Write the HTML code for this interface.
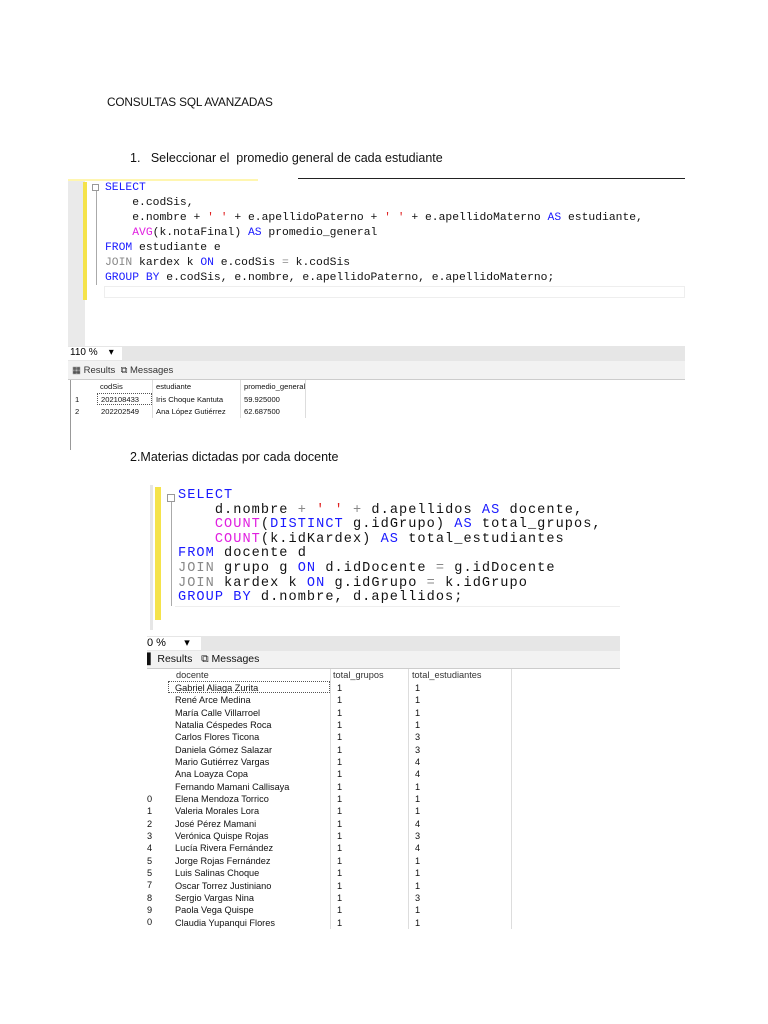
<!DOCTYPE html>
<html><head><meta charset="utf-8"><style>
*{margin:0;padding:0;box-sizing:border-box}
body{width:768px;height:1024px;background:#fff;position:relative;overflow:hidden;font-family:"Liberation Sans",sans-serif}
.a{position:absolute;white-space:pre}
.t{font-family:"Liberation Sans",sans-serif;font-size:12.5px;color:#111}
.c1{font-family:"Liberation Mono",monospace;font-size:11.35px;color:#111;line-height:15px}
.c2{font-family:"Liberation Mono",monospace;font-size:13.6px;letter-spacing:1.05px;color:#111;line-height:14.6px}
.k{color:#1a1aff}.f{color:#e020e0}.g{color:#888}.s{color:#e02020}
.sm{font-size:7.6px;color:#111}
.r2{font-size:9.2px;color:#111}
</style></head><body>
<div class="a t" style="left:107px;top:95px;font-size:11.8px;letter-spacing:-0.15px">CONSULTAS SQL AVANZADAS</div>
<div class="a t" style="left:130px;top:151px">1.   Seleccionar el  promedio general de cada estudiante</div>

<!-- block 1 -->
<div class="a" style="left:68px;top:179px;width:190px;height:2px;background:#fff6b0"></div>
<div class="a" style="left:298px;top:178px;width:387px;height:1px;background:#222"></div>
<div class="a" style="left:68px;top:181px;width:17px;height:166px;background:#eaeaea"></div>
<div class="a" style="left:83px;top:182px;width:4px;height:118px;background:#f5e34a"></div>
<div class="a" style="left:96px;top:189px;width:1px;height:96px;background:#aaa"></div>
<div class="a" style="left:92px;top:184px;width:7px;height:7px;border:1px solid #999;background:#fff"></div>
<div class="a" style="left:104px;top:286px;width:581px;height:12px;border:1px solid #eee"></div>
<div class="a c1" style="left:105px;top:181px"><span class="k">SELECT</span>
    e.codSis,
    e.nombre + <span class="s">' '</span> + e.apellidoPaterno + <span class="s">' '</span> + e.apellidoMaterno <span class="k">AS</span> estudiante,
    <span class="f">AVG</span>(k.notaFinal) <span class="k">AS</span> promedio_general
<span class="k">FROM</span> estudiante e
<span class="g">JOIN</span> kardex k <span class="k">ON</span> e.codSis <span class="g">=</span> k.codSis
<span class="k">GROUP BY</span> e.codSis, e.nombre, e.apellidoPaterno, e.apellidoMaterno;</div>
<div class="a" style="left:68px;top:346px;width:617px;height:15px;background:#e6e6e6"></div>
<div class="a" style="left:68px;top:347px;width:54px;height:13px;background:#fff"></div>
<div class="a" style="left:70px;top:347px;font-size:10px">110 %    ▾</div>
<div class="a" style="left:68px;top:361px;width:617px;height:18px;background:#f2f2f2"></div>
<div class="a" style="left:72px;top:365px;font-size:9.5px;color:#333">▦ Results  ⧉ Messages</div>
<div class="a" style="left:70px;top:379px;width:1px;height:71px;background:#999"></div>
<div class="a" style="left:68px;top:379px;width:617px;height:1px;background:#ccc"></div>
<div class="a sm" style="left:100px;top:382px">codSis</div>
<div class="a sm" style="left:156px;top:382px">estudiante</div>
<div class="a sm" style="left:244px;top:382px">promedio_general</div>
<div class="a" style="left:152px;top:380px;width:1px;height:38px;background:#ddd"></div>
<div class="a" style="left:240px;top:380px;width:1px;height:38px;background:#ddd"></div>
<div class="a" style="left:305px;top:380px;width:1px;height:38px;background:#ddd"></div>
<div class="a" style="left:97px;top:393px;width:55px;height:12px;border:1px dotted #555"></div>
<div class="a sm" style="left:75px;top:395px">1</div>
<div class="a sm" style="left:101px;top:395px">202108433</div>
<div class="a sm" style="left:156px;top:395px">Iris Choque Kantuta</div>
<div class="a sm" style="left:244px;top:395px">59.925000</div>
<div class="a sm" style="left:75px;top:407px">2</div>
<div class="a sm" style="left:101px;top:407px">202202549</div>
<div class="a sm" style="left:156px;top:407px">Ana López Gutiérrez</div>
<div class="a sm" style="left:244px;top:407px">62.687500</div>

<div class="a t" style="left:130px;top:450px">2.Materias dictadas por cada docente</div>

<!-- block 2 -->
<div class="a" style="left:150px;top:485px;width:3px;height:145px;background:#e6e6e6"></div>
<div class="a" style="left:155px;top:487px;width:6px;height:133px;background:#f5e34a"></div>
<div class="a" style="left:171px;top:499px;width:1px;height:107px;background:#aaa"></div>
<div class="a" style="left:167px;top:494px;width:8px;height:8px;border:1px solid #999;background:#fff"></div>
<div class="a c2" style="left:178px;top:489px"><span class="k">SELECT</span>
    d.nombre <span class="g">+</span> <span class="s">' '</span> <span class="g">+</span> d.apellidos <span class="k">AS</span> docente,
    <span class="f">COUNT</span>(<span class="k">DISTINCT</span> g.idGrupo) <span class="k">AS</span> total_grupos,
    <span class="f">COUNT</span>(k.idKardex) <span class="k">AS</span> total_estudiantes
<span class="k">FROM</span> docente d
<span class="g">JOIN</span> grupo g <span class="k">ON</span> d.idDocente <span class="g">=</span> g.idDocente
<span class="g">JOIN</span> kardex k <span class="k">ON</span> g.idGrupo <span class="g">=</span> k.idGrupo
<span class="k">GROUP BY</span> d.nombre, d.apellidos;</div>
<div class="a" style="left:175px;top:606px;width:445px;height:1px;background:#eee"></div>
<div class="a" style="left:147px;top:636px;width:473px;height:15px;background:#e6e6e6"></div>
<div class="a" style="left:147px;top:637px;width:54px;height:13px;background:#fff"></div>
<div class="a" style="left:147px;top:636px;font-size:11px">0 %      ▾</div>
<div class="a" style="left:147px;top:651px;width:473px;height:17px;background:#f2f2f2"></div>
<div class="a" style="left:147px;top:653px;font-size:10.5px;color:#111">▌ Results   ⧉ Messages</div>
<div class="a" style="left:147px;top:668px;width:473px;height:1px;background:#ccc"></div>
<div class="a r2" style="left:176px;top:670px;color:#333">docente</div>
<div class="a r2" style="left:333px;top:670px;color:#333">total_grupos</div>
<div class="a r2" style="left:412px;top:670px;color:#333">total_estudiantes</div>
<div class="a" style="left:330px;top:669px;width:1px;height:260px;background:#ddd"></div>
<div class="a" style="left:408px;top:669px;width:1px;height:260px;background:#ddd"></div>
<div class="a" style="left:511px;top:669px;width:1px;height:260px;background:#ddd"></div>
<div class="a" style="left:168px;top:681px;width:162px;height:12px;border:1px dotted #555"></div>
<div class="a r2" style="left:175px;top:682px;line-height:12.35px">Gabriel Aliaga Zurita
René Arce Medina
María Calle Villarroel
Natalia Céspedes Roca
Carlos Flores Ticona
Daniela Gómez Salazar
Mario Gutiérrez Vargas
Ana Loayza Copa
Fernando Mamani Callisaya
Elena Mendoza Torrico
Valeria Morales Lora
José Pérez Mamani
Verónica Quispe Rojas
Lucía Rivera Fernández
Jorge Rojas Fernández
Luis Salinas Choque
Oscar Torrez Justiniano
Sergio Vargas Nina
Paola Vega Quispe
Claudia Yupanqui Flores</div>
<div class="a r2" style="left:337px;top:682px;line-height:12.35px">1
1
1
1
1
1
1
1
1
1
1
1
1
1
1
1
1
1
1
1</div>
<div class="a r2" style="left:415px;top:682px;line-height:12.35px">1
1
1
1
3
3
4
4
1
1
1
4
3
4
1
1
1
3
1
1</div>
<div class="a r2" style="left:147px;top:793px;line-height:12.35px">0
1
2
3
4
5
5
7
8
9
0</div>
</body></html>
